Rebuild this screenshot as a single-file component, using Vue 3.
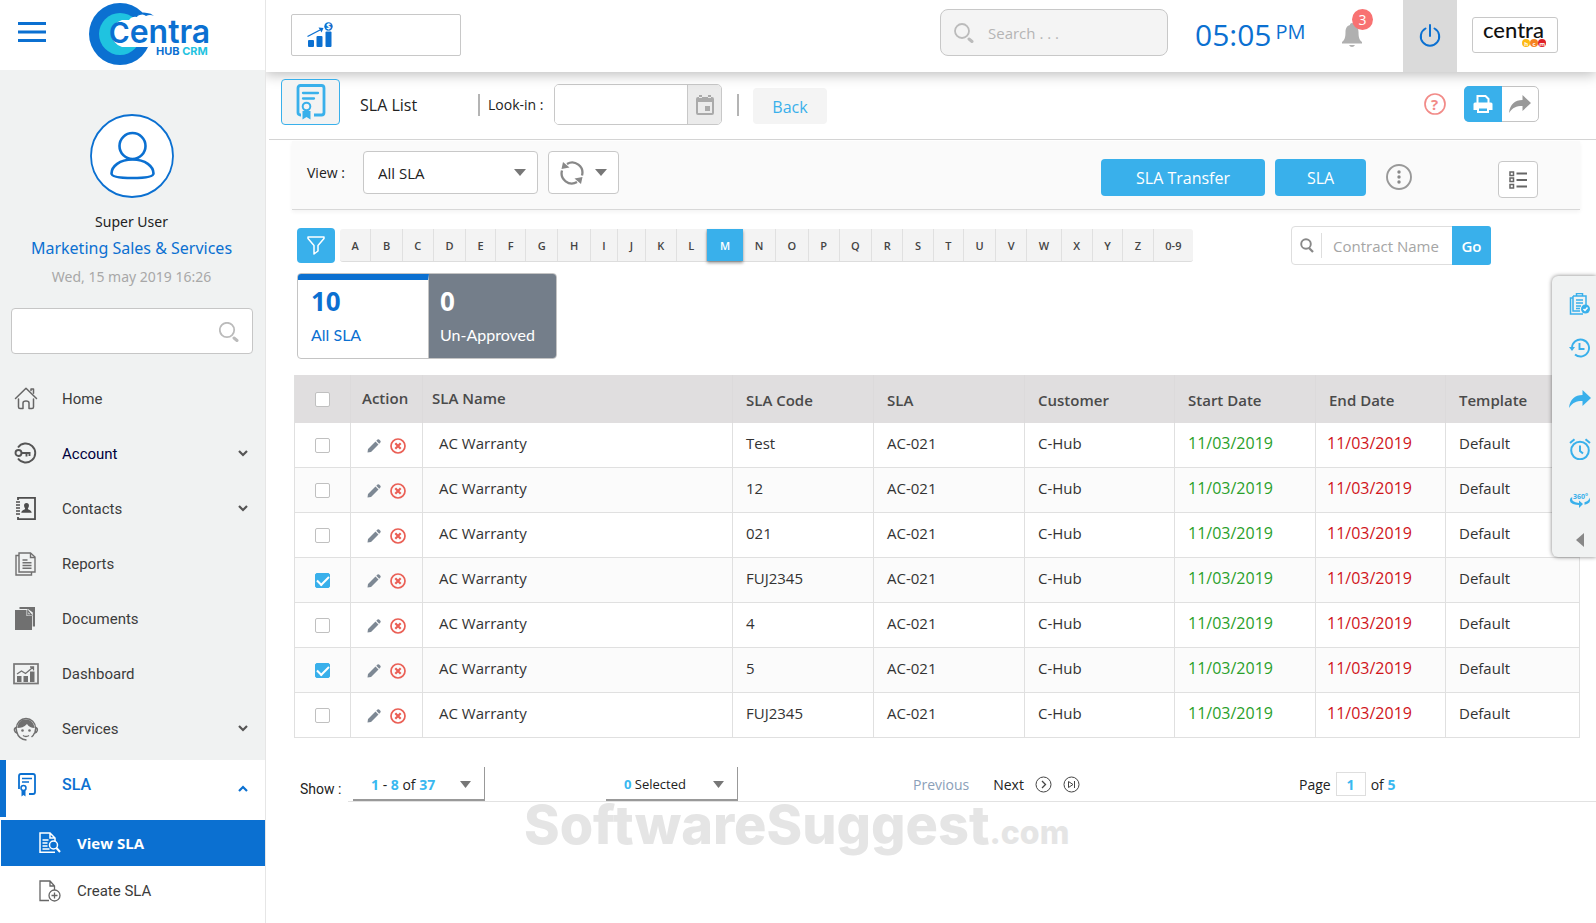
<script setup>
import { ref } from 'vue'

const icons = {
  home: '<g fill="none" stroke="#666" stroke-width="1.5" stroke-linejoin="round" stroke-linecap="round"><path d="M2.500 11.500 13 1.300 23.500 11.500"/><path d="M18 3.500v-1.400h2.500v4.200"/><path d="M5.500 12v8q0 1.500 1.500 1.500h3v-5.500q0-2 3-2t3 2v5.500h3q1.500 0 1.500-1.500v-8"/></g>',
  key: '<g fill="none" stroke="#555" stroke-width="1.900"><path d="M5 5.500a9.500 9.500 0 1 1 0 11"/><circle cx="5.500" cy="11" r="3"/><path d="M8.500 11h9M13.500 11v3.500M16.500 11v3"/></g>',
  contacts: '<path d="M5 3V.8h17v21.400H5V20" fill="none" stroke="#4d4d4d" stroke-width="1.800"/><path d="M3 5h4M3 8h4M3 11h4M3 14h4M3 17h4" stroke="#4d4d4d" stroke-width="1.700"/><path d="M13.500 6c2 0 2.600 1.500 2.400 3-.2 1.500-1 2-1 2.800 0 1 3.500 1 3.800 4H8.300c.3-3 3.800-3 3.800-4 0-.8-.8-1.300-1-2.800-.2-1.500.4-3 2.400-3z" fill="#4d4d4d"/>',
  reports: '<g fill="none" stroke="#707070" stroke-width="1.400"><path d="M6 1h11.500L22 5v15H6z"/><path d="M17.500 1v4.500H22"/><path d="M6 3.500H3V23h15.500v-3"/><path d="M9.500 8h5M9.500 10.800h9M9.500 13.500h9M9.500 16.200h9" stroke-width="1.500"/></g>',
  documents: '<path d="M6.500 0H22v19.500h-2.200V5.500L15 2H6.500z" fill="#707070"/><path d="M2 3h11.500v6H19v14H2z" fill="#707070"/><path d="M14.800 3.500v4.300H18.500z" fill="none" stroke="#707070" stroke-width="1.200"/>',
  dashboard: '<rect x="1" y="2" width="24" height="19.500" fill="none" stroke="#777" stroke-width="1.700"/><path d="M4 20v-6h4.500v6zM10.500 20v-6H15v6zM17 20V9.500h4.500V20z" fill="#707070"/><path d="M4 12 8.500 9l4 2.500L20 5.200M17 5h3.500v3.500" fill="none" stroke="#707070" stroke-width="1.300"/>',
  services: '<g fill="none" stroke="#707070" stroke-width="1.400"><path d="M3.500 11a9.500 9.500 0 0 1 19 0"/><path d="M4 15.500q1.500 6.500 9.500 7.500"/><path d="M3 10.500q-2 1-1.500 3t2.500 2.500z" /><path d="M22.800 10.500q2 1 1.500 3t-2.500 2.500z"/><path d="M21.500 16q-1 2.500-3 4M10 18.500q3 2 6 0"/></g><path d="M4.500 11C5 4 9 2.500 13 2.500S21 5 21.500 11c-3 0-6-1.500-7.500-4C11 10 8 11 4.500 11z" fill="#707070"/><circle cx="9.500" cy="13.500" r="1.300" fill="#707070"/><circle cx="16.500" cy="13.500" r="1.300" fill="#707070"/>',
}

const menu = [
  { label: 'Home', icon: 'home' },
  { label: 'Account', icon: 'key', open: true, strong: true },
  { label: 'Contacts', icon: 'contacts', open: true },
  { label: 'Reports', icon: 'reports' },
  { label: 'Documents', icon: 'documents' },
  { label: 'Dashboard', icon: 'dashboard' },
  { label: 'Services', icon: 'services', open: true },
]

const letters = [...'ABCDEFGHIJKLMNOPQRSTUVWXYZ', '0-9']
const activeLetter = ref('M')

const rows = ref(
  ['Test', '12', '021', 'FUJ2345', '4', '5', 'FUJ2345'].map((code, i) => ({
    id: i + 1,
    code,
    checked: i === 3 || i === 5,
  }))
)
const allChecked = ref(false)
</script>

<template>
  <div class="page">
    <aside class="sidebar">
      <div class="brand">
        <button class="plain burger" aria-label="Toggle menu">
          <svg width="28" height="20"><path d="M0 1.500h28M0 10h28M0 18.500h28" stroke="#0b70d1" stroke-width="3" /></svg>
        </button>
        <svg class="logo" width="124" height="64" viewBox="88 2 124 64" role="img" aria-label="Centra Hub CRM">
          <circle cx="120" cy="34" r="31" fill="#0b70d1" />
          <circle cx="120" cy="34" r="21" fill="#1fc3e0" />
          <path d="M122 20a14 14 0 0 0 0 27h26l8-5 14-1V16h-18q-3-4-8-2-5-1-7 3-5-1-8 3z" fill="#fff" />
          <path d="M137 16q4-5 10-3 4 0 7 3-4-2-8 0-3-3-9 0z" fill="#0b70d1" />
          <text x="109" y="43" class="logo-name"><tspan class="logo-cap">C</tspan>entra</text>
          <text x="156" y="55" class="logo-sub">HUB <tspan fill="#1fc3e0">CRM</tspan></text>
        </svg>
      </div>

      <div class="profile">
        <svg width="84" height="84" viewBox="0 0 84 84" fill="none" stroke="#0b70d1">
          <circle cx="42" cy="42" r="41" fill="#fff" stroke-width="1.800" />
          <g stroke-width="2.600"><circle cx="42.500" cy="32" r="13" /><path d="M42.500 45.500c13 0 21 7 21 14 0 3-7 4.500-21 4.500s-21-1.500-21-4.500c0-7 8-14 21-14z" /></g>
        </svg>
        <div class="user">Super User</div>
        <div class="dept">Marketing Sales &amp; Services</div>
        <div class="date">Wed, 15 may 2019 16:26</div>
      </div>

      <div class="side-search">
        <input type="text" aria-label="Search menu" />
        <svg width="20" height="20" viewBox="0 0 20 20" fill="none" stroke="#bbb"><circle cx="8" cy="8" r="7.200" stroke-width="1.800" /><path d="m15 16 3 2.500" stroke-width="3" stroke-linecap="round" /></svg>
      </div>

      <nav class="menu">
        <a v-for="item in menu" :key="item.label" href="#" class="item" :class="{ strong: item.strong }">
          <svg class="icon" width="26" height="24" viewBox="0 0 26 24" v-html="icons[item.icon]"></svg>
          <span class="label">{{ item.label }}</span>
          <svg v-if="item.open" width="10" height="7" viewBox="0 0 10 7"><path d="m1 1 4 4 4-4" fill="none" stroke="#555" stroke-width="2.200" /></svg>
        </a>
        <a href="#" class="item current">
          <svg class="icon" width="26" height="24" viewBox="0 0 26 24" fill="none" stroke="#0b70d1">
            <path d="M6 16V3q0-2 2-2h12q2 0 2 2v16q0 2-2 2h-4" stroke-width="1.800" />
            <path d="M9 5.500h10M9 9h7" stroke-width="1.700" />
            <circle cx="10.500" cy="15" r="2.500" stroke-width="1.500" /><path d="M8.500 17.500v6l2-1.500 2 1.500v-6z" fill="#0b70d1" stroke="none" />
          </svg>
          <span class="label">SLA</span>
          <svg class="up" width="10" height="7" viewBox="0 0 10 7"><path d="m1 6 4-4 4 4" fill="none" stroke="#0b70d1" stroke-width="2.200" /></svg>
        </a>
        <div class="submenu">
          <a href="#" class="sub active">
            <svg width="22" height="22" viewBox="0 0 22 22" fill="none" stroke="#fff" stroke-width="1.500"><path d="M16 20.200H1V1h10l5 5v3M11 1v5h5M3.500 8h6M3.500 11h5M3.500 14h5M3.500 17h7" /><circle cx="14.500" cy="13" r="4" /><path d="m17.500 16 3.500 4" stroke-width="2" /></svg>
            View SLA
          </a>
          <a href="#" class="sub">
            <svg width="22" height="22" viewBox="0 0 22 22" fill="none" stroke="#666" stroke-width="1.300"><path d="M10 20.500H1V1h10l4.500 5v4M11 1v5h4.500" /><circle cx="15.500" cy="15.500" r="5.500" /><path d="M12.500 15.500h6M15.500 12.500v6" /></svg>
            Create SLA
          </a>
        </div>
      </nav>
    </aside>

    <div class="content">
      <header class="topbar">
        <div class="shortcut">
          <svg width="26" height="26" viewBox="0 0 26 26" fill="#0b70d1"><rect x="1" y="18" width="6" height="7" rx="1" /><rect x="9.500" y="14" width="6" height="11" rx="1" /><rect x="18.500" y="9.500" width="6" height="15.500" rx="1" /><path d="M.5 14.500 13 8" stroke="#0b70d1" stroke-width="1.300" /><path d="m11.500 5.500 5 .5-2 4.500z" /><circle cx="21.500" cy="4.500" r="4.200" /><text x="19.300" y="7.500" class="coin">$</text></svg>
        </div>
        <label class="global-search">
          <svg width="20" height="20" viewBox="0 0 20 20" fill="none" stroke="#bbb"><circle cx="8" cy="8" r="7" stroke-width="1.800" /><path d="m15 16 3 2.500" stroke-width="3" stroke-linecap="round" /></svg>
          <input type="text" placeholder="Search . . ." aria-label="Search" />
        </label>
        <div class="clock">05:05 <span class="ampm">PM</span></div>
        <button class="plain bell" aria-label="Notifications">
          <svg width="20" height="24" viewBox="0 0 20 24" fill="#b0b0b0"><path d="M10 0c1.500 0 2 1 2 2 3.500 1 4.500 4 4.500 7 0 6 1 8 3.500 10v1.500H0V19c2.500-2 3.500-4 3.500-10 0-3 1-6 4.500-7 0-1 .5-2 2-2zM7 22h6q-1 2-3 2t-3-2z" /></svg>
          <span class="badge">3</span>
        </button>
        <button class="plain power" aria-label="Log out">
          <svg width="22" height="24" viewBox="0 0 22 24" fill="none" stroke="#0b70d1" stroke-width="2"><path d="M6.500 4.500a9.200 9.200 0 1 0 9 0M11 1v11" stroke-linecap="round" /></svg>
        </button>
        <a href="#" class="hcm" aria-label="Centra HCM">
          <svg width="74" height="34" viewBox="0 0 74 34">
            <text x="5" y="20" class="hcm-name">centra</text>
            <circle cx="48" cy="25" r="4" fill="#fdb913" /><circle cx="56" cy="25" r="4" fill="#f58220" /><circle cx="64" cy="25" r="4" fill="#de1f26" />
            <g class="hcm-sub"><text x="46.300" y="27.500">h</text><text x="54.500" y="27.500">c</text><text x="61.300" y="27.500">m</text></g>
          </svg>
        </a>
      </header>

      <section class="titlebar">
        <span class="tile">
          <svg width="30" height="36" viewBox="0 0 30 36" fill="none" stroke="#39b0eb"><path d="M5 31H4.500Q2 31 2 28.500V4q0-2.500 2.500-2.500h21Q28 1.500 28 4v24.500q0 2.500-2.500 2.500H18" stroke-width="2.800" /><path d="M7 9h15M7 14.500h11" stroke-width="2.300" stroke-linecap="round" /><circle cx="10.500" cy="22.500" r="3.800" stroke-width="2" /><path d="M6.500 27h8v8.500l-4-2.500-4 2.500z" fill="#39b0eb" stroke="none" /></svg>
        </span>
        <h1>SLA List</h1>
        <span class="bar"></span>
        <label class="lookin" for="lookin">Look-in :</label>
        <div class="datebox">
          <input id="lookin" type="text" />
          <button class="plain" aria-label="Pick date"><svg width="18" height="20" viewBox="0 0 18 20"><path d="M2 2h14q2 0 2 2v14q0 2-2 2H2q-2 0-2-2V4q0-2 2-2zm0 5v11h14V7zM3 0h3v3H3zM12 0h3v3h-3zM9 11h5v5H9z" fill="#aaa" fill-rule="evenodd" /></svg></button>
        </div>
        <span class="bar second"></span>
        <button class="back">Back</button>
        <span class="grow"></span>
        <button class="plain help" aria-label="Help">
          <svg width="22" height="22" viewBox="0 0 22 22"><circle cx="11" cy="11" r="10" fill="none" stroke="#f28b88" stroke-width="1.700" /><text x="7" y="16.500" class="qmark">?</text></svg>
        </button>
        <div class="pair">
          <button class="plain print" aria-label="Print"><svg width="20" height="20" viewBox="0 0 20 20"><path d="M4.500 9V2h8l3 3v4" fill="none" stroke="#fff" stroke-width="2" /><path d="M2 8.500h16q1.500 0 1.500 1.500v6H16v3H4v-3H.5v-6Q.5 8.500 2 8.500z" fill="#fff" /><path d="M6 14.500h8v2.500H6z" fill="#39b0eb" /></svg></button>
          <button class="plain share" aria-label="Share"><svg width="22" height="18" viewBox="0 0 22 18"><path d="M0 18C1 9 6 5 13.500 5V0L22 8l-8.500 8v-5C7 11 4 12.500 0 18z" fill="#999" /></svg></button>
        </div>
      </section>

      <section class="toolbar">
        <label for="view">View :</label>
        <div class="pick">
          <select id="view"><option>All SLA</option></select>
          <svg width="12" height="8"><path d="M0 0h12L6 7z" fill="#777" /></svg>
        </div>
        <button class="refresh" aria-label="Refresh">
          <svg width="24" height="24" viewBox="0 0 24 24" fill="none" stroke="#888" stroke-width="2.300"><path d="M22 14.500A10.200 10.200 0 0 0 7 3M2 9.500A10.200 10.200 0 0 0 17 21" /><path d="M1.500 8 3 1l6.500 5.500zM22.500 16 21 23l-6.500-5.500z" fill="#888" stroke="none" /></svg>
          <svg width="12" height="8"><path d="M0 0h12L6 7z" fill="#777" /></svg>
        </button>
        <span class="grow"></span>
        <button class="primary wide">SLA Transfer</button>
        <button class="primary">SLA</button>
        <button class="plain more" aria-label="More options">
          <svg width="26" height="26"><circle cx="13" cy="13" r="12" fill="none" stroke="#999" stroke-width="1.900" /><g fill="#888"><circle cx="13" cy="8" r="1.700" /><circle cx="13" cy="13" r="1.700" /><circle cx="13" cy="18" r="1.700" /></g></svg>
        </button>
        <button class="columns" aria-label="List view">
          <svg width="18" height="18" fill="none" stroke="#666" stroke-width="1.500"><path d="M7.500 2.500H18M7.500 9H18M7.500 15.500H18" stroke-width="1.800" /><path d="M1 1h3.500v3.500H1zM1 7h3.500v3.500H1zM1 13.500h3.500V17H1z" /></svg>
        </button>
      </section>

      <section class="filters">
        <button class="plain funnel" aria-label="Filter">
          <svg width="18" height="19" viewBox="0 0 18 19" fill="none" stroke="#fff" stroke-width="1.500" stroke-linejoin="round"><path d="M1 1h16v1.500L11 9.500v5.500L7 18V9.500L1 2.500z" /></svg>
        </button>
        <div class="letters">
          <button v-for="l in letters" :key="l" class="plain" :class="{ on: l === activeLetter }" @click="activeLetter = l">{{ l }}</button>
        </div>
        <span class="grow"></span>
        <form class="contract" @submit.prevent>
          <span class="glass"><svg width="14" height="15" viewBox="0 0 14 15" fill="none" stroke="#888"><circle cx="6" cy="6" r="4.800" stroke-width="1.900" /><path d="m9 10 4 4" stroke-width="2.300" /></svg></span>
          <input type="text" placeholder="Contract Name" aria-label="Contract Name" />
          <button class="plain">Go</button>
        </form>
      </section>

      <section class="stats">
        <button class="plain stat sel"><b>10</b><span>All SLA</span></button>
        <button class="plain stat dark"><b>0</b><span>Un-Approved</span></button>
      </section>

      <table class="grid">
        <colgroup>
          <col class="c-check" /><col class="c-action" /><col /><col class="c-code" /><col class="c-sla" /><col class="c-cust" /><col class="c-start" /><col class="c-end" /><col class="c-tpl" />
        </colgroup>
        <thead>
          <tr>
            <th class="mid"><input v-model="allChecked" type="checkbox" aria-label="Select all" /></th>
            <th class="raised act">Action</th>
            <th class="raised">SLA Name</th>
            <th>SLA Code</th><th>SLA</th><th>Customer</th><th>Start Date</th><th>End Date</th><th>Template</th>
          </tr>
        </thead>
        <tbody>
          <tr v-for="r in rows" :key="r.id">
            <td class="mid"><input v-model="r.checked" type="checkbox" :aria-label="'Select row ' + r.id" /></td>
            <td>
              <div class="acts">
                <button class="plain" aria-label="Edit"><svg width="14" height="14" viewBox="0 0 14 14" fill="#7d8894"><path d="m1 10 7.500-7.500L11.500 5.500 4 13l-3.500.5zM9.300 1.700 10.500.5q.8-.6 1.600 0l1.300 1.300q.6.800 0 1.600L12.200 4.700z" /></svg></button>
                <button class="plain" aria-label="Delete"><svg width="16" height="16" viewBox="0 0 16 16" fill="none" stroke="#ea5f55"><circle cx="8" cy="8" r="7" stroke-width="1.700" /><path d="m5.300 5.300 5.400 5.400M10.700 5.300l-5.400 5.400" stroke-width="2.200" /></svg></button>
              </div>
            </td>
            <td class="name">AC Warranty</td>
            <td>{{ r.code }}</td>
            <td>AC-021</td>
            <td>C-Hub</td>
            <td class="start">11/03/2019</td>
            <td class="end">11/03/2019</td>
            <td>Default</td>
          </tr>
        </tbody>
      </table>

      <footer class="pager">
        <span class="show">Show :</span>
        <button class="drop range" aria-haspopup="listbox"><span><b>1</b> - <b>8</b> of <b>37</b></span><svg width="11" height="7"><path d="M0 0h11L5.500 7z" fill="#777" /></svg></button>
        <button class="drop chosen" aria-haspopup="listbox"><span><b>0</b> Selected</span><svg width="11" height="7"><path d="M0 0h11L5.500 7z" fill="#777" /></svg></button>
        <div class="steps">
          <a href="#" class="prev">Previous</a>
          <a href="#">Next</a>
          <a href="#" aria-label="Next page"><svg width="17" height="17" fill="none" stroke="#444"><circle cx="8.500" cy="8.500" r="7.500" /><path d="m7 5 3.500 3.500L7 12" stroke-width="1.300" /></svg></a>
          <a href="#" aria-label="Last page"><svg width="17" height="17" fill="none" stroke="#444"><circle cx="8.500" cy="8.500" r="7.500" /><path d="M5.500 5.500v6l4.500-3zM11.500 5v7" /></svg></a>
        </div>
        <div class="pages"><label for="pageno">Page</label><input id="pageno" type="text" value="1" /><span>of <b>5</b></span></div>
      </footer>

      <div class="watermark">SoftwareSuggest<span>.com</span></div>
    </div>

    <aside class="dock">
      <button class="plain" aria-label="Tasks"><svg width="21" height="22" viewBox="0 0 21 22" fill="none" stroke="#39b0eb" stroke-width="1.500"><path d="M4 3h13v9M4 3v15h7M7.500 2.500v-2h6v2M4 5H1.500v16H14M7 7h7M7 10h7M7 13h5M7 15.500h4" /><circle cx="16.500" cy="16" r="4.500" fill="#39b0eb" stroke="none" /><path d="m14.500 16 1.500 1.500 2.500-3" stroke="#fff" /></svg></button>
      <button class="plain" aria-label="History"><svg width="21" height="20" viewBox="0 0 21 20" fill="none" stroke="#39b0eb" stroke-width="1.900"><path d="M3 10a8.500 8.500 0 1 1 3 6.500M10.500 5v6h5" /><path d="M0 9h6l-3 4z" fill="#39b0eb" stroke="none" /></svg></button>
      <button class="plain" aria-label="Forward"><svg width="22" height="18" viewBox="0 0 22 18"><path d="M0 18C1 9 6 5 13.500 5V0L22 8l-8.500 8v-5C7 11 4 12.500 0 18z" fill="#39b0eb" /></svg></button>
      <button class="plain" aria-label="Reminders"><svg width="22" height="22" viewBox="0 0 22 22" fill="none" stroke="#39b0eb"><circle cx="11" cy="12.500" r="8.800" stroke-width="2" /><path d="M11 7.500V13l3 2.500M1 5l4.500-3.800M21 5l-4.500-3.800" stroke-width="2" /></svg></button>
      <button class="plain" aria-label="360 view"><svg width="22" height="18" viewBox="0 0 22 18"><text x="4" y="8" class="deg">360°</text><path d="M2 6.500q-3 4.500 2 6.500 3 1 6 1v3l4-4-4-3.500v2.500q-4-.5-6-2-1.500-1.500-.5-3.500zM20 6.500q3 4.500-2 6.500l-2.500.8v-2.500q3-.8 4-2.300.8-1.200.5-2.500z" fill="#39b0eb" /></svg></button>
      <button class="plain" aria-label="Collapse"><svg width="8" height="14"><path d="M8 0v14L0 7z" fill="#888" /></svg></button>
    </aside>
  </div>
</template>

<style>
body { margin: 0; background: #fff; }
</style>

<style scoped>
.page { display: grid; grid-template-columns: 265px minmax(0, 1fr); min-height: 100vh; position: relative; overflow: hidden; font-family: "Open Sans", "Noto Sans", sans-serif; font-size: 15px; color: #333; }
.page *, .page { box-sizing: border-box; }
svg { display: block; flex: none; }
a { text-decoration: none; color: inherit; }
button, input, select { font-family: inherit; font-size: inherit; color: inherit; margin: 0; }
.plain { border: 0; background: none; padding: 0; }
.grow { flex: 1; }
input { outline: 0; min-width: 0; }

.sidebar { background: #fff; box-shadow: 1px 0 0 #e6e6e6; position: relative; z-index: 1; }
.brand { height: 70px; display: flex; align-items: center; padding: 0 18px; }
.burger { margin-right: 42px; margin-bottom: 6px; }
.logo { margin-bottom: 2px; }
.logo-name { font: 600 32px Inter, sans-serif; fill: #0b70d1; }
.logo-cap { font-size: 28px; }
.logo-sub { font: 700 11px Inter, sans-serif; fill: #0b70d1; stroke: #fff; stroke-width: 3px; paint-order: stroke; }
.profile { background: #f0f2f2; padding: 44px 2px 0 0; display: flex; flex-direction: column; align-items: center; line-height: 20px; font-family: "Noto Sans", sans-serif; }
.user { margin-top: 14px; color: #222; font-size: 14px; }
.dept { margin-top: 6px; font-size: 16px; color: #0b70d1; }
.date { margin-top: 9px; font-size: 14px; color: #a8a8a8; }
.side-search { background: #f0f2f2; padding: 21px 12px 17px 11px; display: flex; align-items: center; position: relative; }
.side-search input { width: 100%; height: 46px; border: 1px solid #c6c6c6; border-radius: 4px; background: #fff; padding: 0 44px 0 12px; }
.side-search svg { position: absolute; right: 26px; top: 35px; }
.menu { font-family: Roboto, sans-serif; background: #f0f2f2; }
.item { display: flex; align-items: center; height: 55px; padding: 0 17px 0 13px; font-size: 15px; color: #3c3c3c; }
.item.strong { color: #00003c; }
.item .icon { margin-right: 23px; }
.item .label { flex: 1; }
.item.current { background: #fff; color: #0b70d1; height: 57px; border-left: 6px solid #0b70d1; padding-left: 7px; margin-top: 4px; padding-bottom: 8px; font-weight: 500; font-size: 16px; }
.item .up { margin-top: 8px; }
.submenu { background: #fff; padding: 3px 0 0 1px; }
.sub { display: flex; align-items: center; gap: 16px; height: 46px; padding-left: 38px; font-size: 15px; color: #3c3c3c; margin-bottom: 2px; }
.sub.active { background: #0b70d1; color: #fff; font-family: "Open Sans", sans-serif; font-weight: 700; font-size: 15px; }

.topbar { height: 72px; display: flex; align-items: center; padding: 0 38px 2px 26px; box-shadow: 0 3px 12px rgba(0, 0, 0, .25); position: relative; background: #fff; }
.shortcut { width: 170px; height: 42px; border: 1px solid #c8c8c8; border-radius: 2px; padding: 7px 15px; margin-right: auto; }
.coin { font: 700 8px "Open Sans", sans-serif; fill: #fff; }
.global-search { width: 228px; height: 47px; border: 1px solid #c8c8c8; border-radius: 8px; background: #f4f4f4; display: flex; align-items: center; padding: 0 13px; margin-bottom: 5px; }
.global-search input { border: 0; background: none; width: 100%; padding: 0 0 0 14px; font-size: 15px; }
.global-search input::placeholder { color: #b5b5b5; }
.clock { margin-left: 27px; font-size: 30px; line-height: 40px; color: #0b70d1; display: flex; width: 112px; }
.clock .ampm { font-size: 20px; line-height: 34px; margin-left: 4px; }
.bell { position: relative; margin-left: 35px; }
.badge { position: absolute; left: 10px; top: -14px; width: 21px; height: 21px; border-radius: 50%; background: #f87272; color: #fff; font-size: 14px; line-height: 21px; }
.power { align-self: stretch; width: 54px; margin: 0 15px -2px 41px; background: #dadada; display: grid; place-items: center; }
.hcm { width: 86px; height: 36px; border: 1px solid #c8c8c8; border-radius: 3px; padding: 0 5px; }
.hcm-name { font: 500 22px Lato, sans-serif; fill: #111; }
.hcm-sub { font: 700 6px "Open Sans", sans-serif; fill: #fff; }

.titlebar { height: 68px; border-bottom: 1px solid #d4d4d4; margin-left: 4px; padding: 7px 57px 0 12px; display: flex; align-items: flex-start; }
.tile { width: 59px; height: 46px; border: 1px solid #39b0eb; border-radius: 4px; background: #f3f3f3; display: grid; place-items: center; position: relative; }
h1 { font-size: 16px; font-weight: 400; line-height: 24px; margin: 14px 0 0 20px; width: 118px; color: #222; }
.bar { width: 2px; height: 22px; background: #b4b4b4; margin-top: 15px; }
.lookin { font-size: 14px; line-height: 24px; margin: 14px 0 0 8px; width: 66px; color: #222; }
.datebox { display: flex; width: 168px; height: 41px; margin-top: 5px; border: 1px solid #c8c8c8; border-radius: 5px; overflow: hidden; }
.datebox input { flex: 1; border: 0; width: 100px; }
.datebox button { width: 34px; background: #ebebeb; border-left: 1px solid #c8c8c8; display: grid; place-items: center; }
.bar.second { margin-left: 15px; }
.back { margin: 9px 0 0 14px; padding: 2px 0 0; width: 74px; height: 36px; border: 0; border-radius: 4px; background: #f4f4f4; color: #39b0eb; font-size: 16px; }
.help { margin: 14px 18px 0 0; }
.qmark { font: 700 15px "Open Sans", sans-serif; fill: #f28b88; }
.pair { display: flex; margin-top: 7px; height: 36px; width: 75px; border: 1px solid #c4c4c4; border-radius: 5px; }
.pair button { display: grid; place-items: center; }
.print { width: 38px; background: #39b0eb; border-radius: 5px 0 0 5px; margin: -1px 0 -1px -1px; }
.share { flex: 1; }

.toolbar { margin: 1px 16px 0 27px; height: 69px; background: #fafafa; border-bottom: 1px solid #d8d8d8; box-shadow: 0 2px 4px rgba(0, 0, 0, .05); display: flex; align-items: flex-start; padding: 10px 42px 0 15px; }
.toolbar label { font-size: 14px; line-height: 24px; margin-top: 10px; width: 56px; color: #222; }
.pick { position: relative; width: 175px; height: 43px; }
.pick select { appearance: none; width: 100%; height: 100%; border: 1px solid #c8c8c8; border-radius: 4px; background: #fff; padding: 0 14px; font-size: 15px; color: #222; }
.pick svg { position: absolute; right: 12px; top: 18px; }
.refresh { margin-left: 10px; width: 71px; height: 43px; border: 1px solid #c8c8c8; border-radius: 4px; background: #fff; display: flex; align-items: center; justify-content: space-between; padding: 0 11px; }
.primary { margin: 8px 0 0 10px; height: 37px; width: 91px; border: 0; border-radius: 4px; background: #39b0eb; color: #fff; font-size: 16px; }
.primary.wide { width: 164px; }
.more { margin: 13px 0 0 20px; }
.columns { margin: 10px 0 0 86px; width: 40px; height: 37px; border: 1px solid #c8c8c8; border-radius: 4px; background: #fff; display: grid; place-items: center; padding: 0; }

.filters { display: flex; align-items: center; margin: 16px 105px 0 32px; height: 39px; }
.funnel { width: 38px; height: 35px; background: #39b0eb; border-radius: 4px; display: grid; place-items: center; margin-right: 5px; }
.letters { display: flex; height: 33px; flex: 0 1 853px; background: #f3f3f3; border-bottom: 1px solid #ddd; border-radius: 3px; }
.letters button { flex: 1 1 auto; padding: 0 4px; font-size: 11px; font-weight: 600; color: #444; border-right: 1px solid #e0e0e0; }
.letters button:last-child { border-right: 0; }
.letters .on { background: #39b0eb; color: #fff; flex-grow: 1.200; border: 0; box-shadow: 0 2px 3px rgba(0, 0, 0, .4); }
.contract { display: flex; width: 200px; height: 39px; border: 1px solid #dedede; border-radius: 4px; }
.glass { width: 30px; display: grid; place-items: center; margin: 6px 0; border-right: 1px solid #dedede; }
.contract input { flex: 1; border: 0; width: 100px; padding: 0 0 0 11px; background: none; }
.contract input::placeholder { color: #a5a5a5; }
.contract button { width: 39px; background: #39b0eb; color: #fff; font-weight: 600; font-size: 15px; border-radius: 0 3px 3px 0; margin: -1px; }

.stats { display: flex; margin: 8px 0 0 32px; height: 86px; width: 260px; border: 1px solid #c4c4c4; border-radius: 4px; overflow: hidden; }
.stat { display: flex; flex-direction: column; text-align: left; flex: 1; padding: 13px 11px 0; font-family: Lato, sans-serif; font-size: 16px; line-height: 24px; }
.stat b { font-family: "Noto Sans", sans-serif; font-size: 26px; line-height: 28px; margin-bottom: 8px; }
.stat.sel { border-top: 6px solid #0b70d1; color: #0b70d1; padding: 7px 13px 0; flex: 0 0 131px; border-right: 1px solid #c4c4c4; }
.stat.dark { background: #747e8a; color: #fff; }

.grid { table-layout: fixed; width: calc(100% - 45px); margin: 16px 16px 0 29px; border-collapse: separate; border-spacing: 0; border-left: 1px solid #e0e0e0; }
.c-check { width: 56px; } .c-action { width: 72px; } .c-code { width: 141px; } .c-sla { width: 151px; } .c-cust { width: 150px; } .c-start { width: 141px; } .c-end { width: 130px; } .c-tpl { width: 134px; }
th { height: 48px; background: #e0dedf; color: #4a4a4a; font-family: "Open Sans", sans-serif; font-weight: 600; font-size: 15px; text-align: left; padding: 2px 0 0 13px; border-right: 1px solid #dcdadb; }
th.raised { padding: 0 0 2px 9px; }
th.act { padding-left: 11px; }
td { height: 45px; padding: 0 0 4px 13px; border-right: 1px solid #e0e0e0; border-bottom: 1px solid #e0e0e0; color: #333; }
tbody tr:nth-child(even) td { background: #fbfbfb; }
th.mid, td.mid { text-align: center; padding: 0 0 2px; }
td.name { padding-left: 16px; }
td.start, td.end { font-size: 16px; }
td.start { color: #2aa02a; }
td.end { color: #d0141a; padding-left: 11px; }
.acts { display: flex; align-items: center; gap: 9px; padding: 5px 0 0 3px; }
input[type="checkbox"] { appearance: none; width: 15px; height: 15px; border: 1px solid #c0c0c0; border-radius: 2px; background: #fff; display: inline-grid; place-items: center; vertical-align: middle; }
input[type="checkbox"]:checked { background: #39b0eb; border-color: #39b0eb; }
input[type="checkbox"]:checked::after { content: ""; width: 10px; height: 5px; border: solid #fff; border-width: 0 0 2px 2px; transform: rotate(-45deg); margin-bottom: 3px; }

.pager { margin: 29px 0 0 83px; height: 35px; border-bottom: 1px solid #e2e2e2; display: flex; align-items: stretch; font-size: 14px; color: #222; }
.pager b { color: #39b8f0; font-weight: 700; }
.show { font-family: Roboto, sans-serif; width: 53px; margin-left: -48px; line-height: 44px; white-space: nowrap; }
.drop { width: 132px; border: 0; border-right: 1px solid #999; border-bottom: 2px solid #999; background: #fff; padding: 2px 13px 0 18px; display: flex; align-items: center; justify-content: space-between; font-size: 13px; }
.range { font-size: 14px; }
.chosen { margin-left: 121px; }
.steps { display: flex; align-items: center; margin-left: 175px; gap: 11px; }
.steps .prev { color: #8ba0b8; margin-right: 13px; }
.pages { display: flex; align-items: center; margin-left: 219px; gap: 5px; }
.pages input { width: 30px; height: 24px; border: 1px solid #dedede; text-align: center; color: #39b8f0; font-weight: 700; padding: 0; }
.watermark { margin-left: 259px; font: 800 54px/46px Inter, sans-serif; color: #e5e5e5; white-space: nowrap; }
.watermark span { font-size: 32px; }

.dock { position: absolute; z-index: 2; right: 0; top: 276px; width: 44px; height: 281px; background: #f0f2f2; border-radius: 6px 0 0 6px; box-shadow: 0 0 4px rgba(0, 0, 0, .5); display: grid; grid-template-rows: 45px 44px 57px 43px 60px 20px; place-items: center; padding: 5px 0 0 11px; }
.deg { font: 700 7px "Open Sans", sans-serif; fill: #39b0eb; }
</style>
